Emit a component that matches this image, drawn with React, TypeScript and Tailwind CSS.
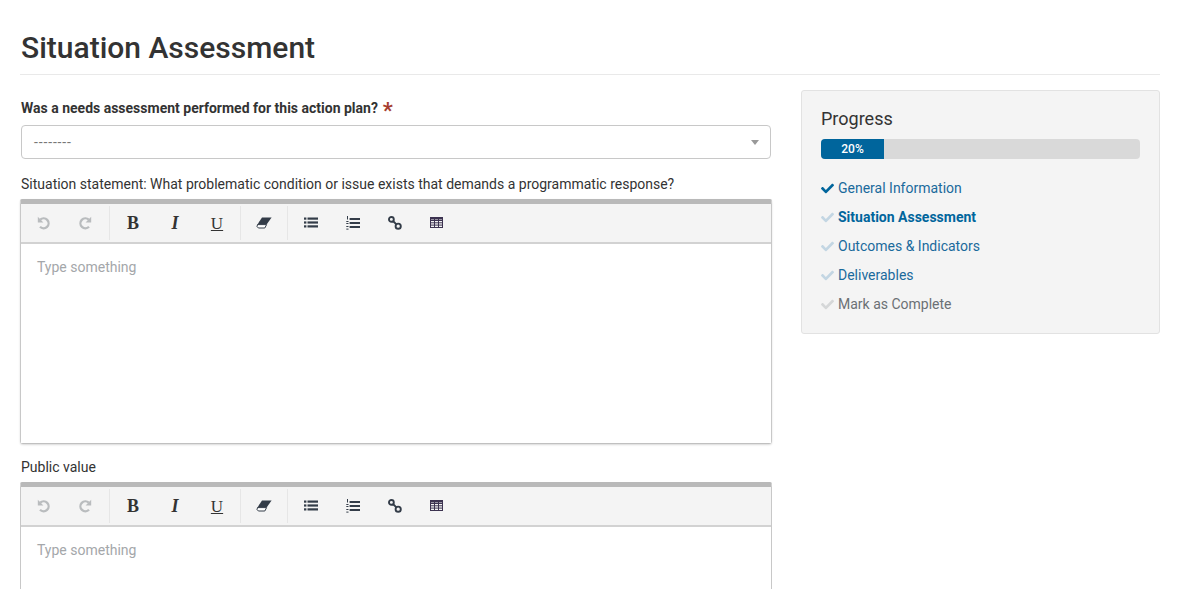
import { FaCheck } from 'react-icons/fa'

const steps = [
  { label: 'General Information', check: 'text-[#00659c]', text: 'text-[#1a6a9c]' },
  { label: 'Situation Assessment', check: 'text-[#c3d6e3]', text: 'text-[#00659c] font-bold' },
  { label: 'Outcomes & Indicators', check: 'text-[#c3d6e3]', text: 'text-[#1a6a9c]' },
  { label: 'Deliverables', check: 'text-[#c3d6e3]', text: 'text-[#1a6a9c]' },
  { label: 'Mark as Complete', check: 'text-[#d5d7d8]', text: 'text-[#6b7075]' },
]

function UndoIcon({ flip }: { flip?: boolean }) {
  return (
    <svg viewBox="0 0 14 14" className={`w-[14px] h-[14px] text-[#b9bcbe] ${flip ? '-scale-x-100' : ''}`} fill="none" stroke="currentColor" strokeWidth="2.3">
      <path d="M3.2 3.6 A5 5 0 1 1 3 10.8" />
      <path d="M.8 .8 V6.4 H6.4 Z" fill="currentColor" stroke="none" />
    </svg>
  )
}

function EraserIcon() {
  return (
    <svg viewBox="0 0 16 12" className="w-4 h-3 text-[#333c48]">
      <path d="M6 .6 H15.6 L10.6 7.6 H1.4 Z" fill="currentColor" />
      <path d="M4.6 4 L.8 9.2 L2.4 11 H8.8 L10.6 7.6 H1.4" fill="#fff" stroke="currentColor" strokeWidth="1" />
    </svg>
  )
}

function BulletsIcon() {
  return (
    <svg viewBox="0 0 14 10" className="w-[14px] h-[11px] text-[#333c48]" fill="currentColor">
      <rect x="0" y="0" width="2.4" height="2.2" />
      <rect x="0" y="3.9" width="2.4" height="2.2" />
      <rect x="0" y="7.8" width="2.4" height="2.2" />
      <rect x="3.5" y="0" width="10.5" height="2.2" />
      <rect x="3.5" y="3.9" width="10.5" height="2.2" />
      <rect x="3.5" y="7.8" width="10.5" height="2.2" />
    </svg>
  )
}

function NumbersIcon() {
  return (
    <svg viewBox="0 0 14 14" className="w-[14px] h-[14px] text-[#333c48]" fill="currentColor">
      <rect x="1" y="0" width="1" height="3.5" />
      <rect x=".3" y="5" width="2.2" height="1" />
      <rect x=".3" y="7" width="2.2" height="1" />
      <rect x=".3" y="10" width="2.2" height="1" />
      <rect x=".3" y="12.6" width="2.2" height="1" />
      <rect x="3.6" y="2" width="10.4" height="2" />
      <rect x="3.6" y="6" width="10.4" height="2" />
      <rect x="3.6" y="10" width="10.4" height="2" />
    </svg>
  )
}

function LinkIcon() {
  return (
    <svg viewBox="0 0 14 14" className="w-[14px] h-[14px] text-[#333c48]" fill="none" stroke="currentColor" strokeWidth="1.9">
      <circle cx="3.4" cy="3.4" r="2.4" />
      <circle cx="10.2" cy="10.2" r="2.6" />
      <path d="M5 5 L8.4 8.4" />
    </svg>
  )
}

function TableIcon() {
  return (
    <svg viewBox="0 0 13 11" className="w-[13px] h-[11px] text-[#3c3350]" fill="none" stroke="currentColor" strokeWidth="1">
      <rect x=".5" y=".5" width="12" height="10" />
      <path d="M.5 3.5 H12.5 M.5 5.8 H12.5 M.5 8.1 H12.5" />
      <path d="M4.5 .5 V10.5 M8.5 .5 V10.5" />
      <path d="M.5 1.5 H12.5" strokeWidth="2" />
    </svg>
  )
}

function ToolBtn({ children, className = '' }: { children: React.ReactNode; className?: string }) {
  return <span className={`w-[42px] h-[34px] flex items-center justify-center ${className}`}>{children}</span>
}

function Editor({ height, cut }: { height: number; cut?: boolean }) {
  return (
    <div className={`w-[752px] -ml-px border-t-[5px] border-t-[#b9b9b9] border-x border-x-[#c8c8c8] rounded-t-[2px] ${cut ? '' : 'border-b border-b-[#c0c0c0] rounded-b-[3px] shadow-[0_1px_2px_rgba(0,0,0,0.15)]'}`}>
      <div className="h-[40px] bg-[#f4f4f4] border-b-2 border-b-[#d2d2d2] flex items-center pb-[1px]">
        <div className="flex w-[89px] pl-[2px] border-r border-r-[#e6e6e6] h-[34px]">
          <ToolBtn><UndoIcon /></ToolBtn>
          <ToolBtn className="-ml-px"><UndoIcon flip /></ToolBtn>
        </div>
        <div className="flex w-[131px] pl-[2px] pt-[1px] border-r border-r-[#e6e6e6] h-[34px] font-['Liberation_Serif',serif] text-[18px] text-[#333]">
          <ToolBtn><span className="font-bold">B</span></ToolBtn>
          <ToolBtn><span className="italic font-bold">I</span></ToolBtn>
          <ToolBtn><span className="underline text-[17px]">U</span></ToolBtn>
        </div>
        <div className="flex w-[47px] pl-[2px] border-r border-r-[#e6e6e6] h-[34px]">
          <ToolBtn><EraserIcon /></ToolBtn>
        </div>
        <div className="flex pl-[2px]">
          <ToolBtn><BulletsIcon /></ToolBtn>
          <ToolBtn><NumbersIcon /></ToolBtn>
          <ToolBtn><LinkIcon /></ToolBtn>
          <ToolBtn className="-ml-px"><TableIcon /></ToolBtn>
        </div>
      </div>
      <div className="px-4 pt-[13px] text-[14px] leading-[20px] text-[#a4a7aa] bg-white" style={{ height }}>
        Type something
      </div>
    </div>
  )
}

export default function App() {
  return (
    <div className="h-[589px] overflow-hidden bg-white font-['Roboto',sans-serif] text-[14px] text-[#333] px-[20px]">
      <div className="w-[1140px] h-[75px] border-b border-b-[#e9e9e9] pt-[28px] pl-px">
        <h1 className="text-[30px] leading-[40px] font-medium text-[#333]">Situation Assessment</h1>
      </div>

      <div className="flex gap-[30px] pt-[16px]">
        {/* Form */}
        <div className="w-[750px] shrink-0 ml-px">
          <label className="flex items-center h-[34px] font-bold text-[14px] text-[#333]">
            Was a needs assessment performed for this action plan?
            <span className="text-[#a63d2f] ml-[5px] text-[22px] leading-none pt-[6px]">*</span>
          </label>
          <div className="h-[34px] border border-[#c8c8c8] rounded-[4px] flex items-center justify-between pl-[12px] pr-[11px] text-[#777]">
            <span className="tracking-[0.85px]">--------</span>
            <span className="w-0 h-0 border-x-[4px] border-x-transparent border-t-[5px] border-t-[#999]" />
          </div>
          <p className="mt-[15px] mb-[5px] h-[20px] leading-[20px]">
            Situation statement: What problematic condition or issue exists that demands a programmatic response?
          </p>
          <Editor height={199} />
          <p className="mt-[13px] mb-[5px] h-[20px] leading-[20px]">Public value</p>
          <Editor height={120} cut />
        </div>

        {/* Progress */}
        <aside className="w-[359px] shrink-0 h-[244px] -mt-px bg-[#f4f4f4] border border-[#e2e2e2] rounded-[3px] px-[19px] pt-[16px]">
          <h2 className="text-[18px] leading-[24px] font-normal text-[#333]">Progress</h2>
          <div className="mt-[8px] h-[20px] bg-[#d9d9d9] rounded-[4px] overflow-hidden">
            <div className="w-[63px] h-full bg-[#00659c] text-white text-[12px] leading-[20px] font-medium text-center">20%</div>
          </div>
          <ul className="mt-[15px]">
            {steps.map((s) => (
              <li key={s.label} className="h-[29px] flex items-center">
                <FaCheck className={`w-[13px] h-[13px] mr-[4px] ${s.check}`} />
                <span className={s.text}>{s.label}</span>
              </li>
            ))}
          </ul>
        </aside>
      </div>
    </div>
  )
}
